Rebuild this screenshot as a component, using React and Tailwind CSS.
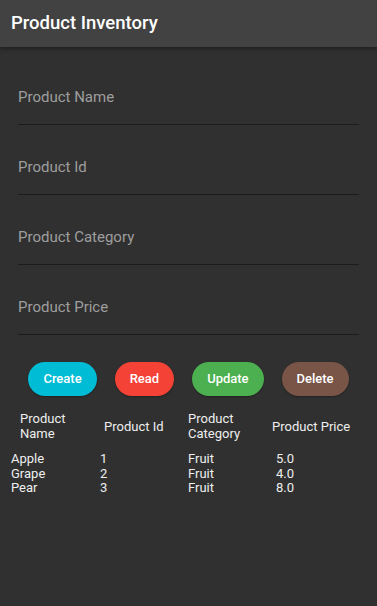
const fields = ["Product Name", "Product Id", "Product Category", "Product Price"];

const buttons = [
  { label: "Create", color: "bg-[#00bcd4]" },
  { label: "Read", color: "bg-[#f44336]" },
  { label: "Update", color: "bg-[#4caf50]" },
  { label: "Delete", color: "bg-[#795548]" },
];

const products = [
  { name: "Apple", id: "1", category: "Fruit", price: "5.0" },
  { name: "Grape", id: "2", category: "Fruit", price: "4.0" },
  { name: "Pear", id: "3", category: "Fruit", price: "8.0" },
];

export default function App() {
  return (
    <div className="w-[377px] h-[606px] bg-[#303030] font-['Roboto',sans-serif] overflow-hidden">
      {/* App bar */}
      <div className="relative z-10 h-[47px] bg-[#424242] flex items-center px-[11px] shadow-[0_2px_4px_rgba(0,0,0,0.35)]">
        <h1 className="text-[18.5px] font-medium text-white">Product Inventory</h1>
      </div>

      {/* Form fields */}
      <div className="px-[18px] pt-[8px]">
        {fields.map((f) => (
          <div key={f} className="h-[70px] flex items-end border-b border-[#1c1c1c]">
            <span className="pb-[16px] text-[15px] text-[#9e9e9e]">{f}</span>
          </div>
        ))}
      </div>

      {/* Action buttons */}
      <div className="flex justify-center gap-[18px] mt-[27px]">
        {buttons.map((b) => (
          <button
            key={b.label}
            className={`${b.color} h-[34px] px-[15px] rounded-full text-white text-[13px] font-medium shadow-[0_1px_2px_rgba(0,0,0,0.3)]`}
          >
            {b.label}
          </button>
        ))}
      </div>

      {/* Table */}
      <div className="text-[13px] text-[#eeeeee] leading-[15px]">
        <div className="grid grid-cols-[84px_84px_84px_1fr] items-center mt-[15px] pl-[20px]">
          <span className="w-[60px]">Product Name</span>
          <span>Product Id</span>
          <span>Product Category</span>
          <span>Product Price</span>
        </div>
        <div className="mt-[11px] pl-[11px]">
          {products.map((p) => (
            <div key={p.name} className="grid grid-cols-[89px_88px_88px_1fr] leading-[14.5px]">
              <span>{p.name}</span>
              <span>{p.id}</span>
              <span>{p.category}</span>
              <span>{p.price}</span>
            </div>
          ))}
        </div>
      </div>
    </div>
  );
}
